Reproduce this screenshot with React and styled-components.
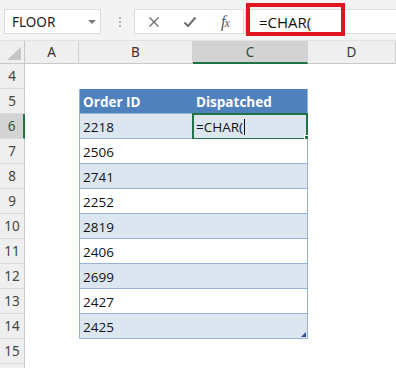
import React from 'react';
import styled, { createGlobalStyle } from 'styled-components';

const Global = createGlobalStyle`
  html, body { margin: 0; padding: 0; background: #fff; }
  body { font-family: "Open Sans", "Liberation Sans", sans-serif; overflow: hidden; }
`;

const Page = styled.div`
  width: 396px;
  height: 368px;
  overflow: hidden;
  background: #fff;
`;

const Toolbar = styled.div`
  height: 40px;
  box-sizing: border-box;
  background: #f3f3f3;
  display: flex;
  align-items: flex-start;
  padding: 9px 0 0 4px;
`;

const NameBox = styled.div`
  width: 97px;
  height: 25px;
  box-sizing: border-box;
  background: #fff;
  border: 1px solid #dcdcdc;
  display: flex;
  align-items: center;
  justify-content: space-between;
  padding: 0 4px 0 7px;
  font: 13.5px "Noto Sans", sans-serif;
  color: #222;
`;

const Caret = styled.span`
  width: 0;
  height: 0;
  border-left: 4px solid transparent;
  border-right: 4px solid transparent;
  border-top: 4px solid #7a7a7a;
`;

const Dots = styled.div`
  margin: 8px 13px 0 18px;
  display: flex;
  flex-direction: column;
  gap: 2px;
  & > span {
    width: 2px;
    height: 2px;
    background: #b5b5b5;
  }
`;

const FxBox = styled.div`
  width: 110px;
  height: 25px;
  box-sizing: border-box;
  background: #fff;
  border: 1px solid #dcdcdc;
  display: flex;
  align-items: center;
`;

const FxSlot = styled.div`
  width: ${p => p.$w}px;
  height: 100%;
  display: flex;
  align-items: center;
  justify-content: center;
`;

const FxText = styled.span`
  font: italic 16px "Liberation Serif", serif;
  color: #555;
  letter-spacing: -1px;
  & > small { font-size: 12px; }
`;

const FormulaInput = styled.div`
  position: relative;
  flex: 1;
  height: 25px;
  margin-left: 1px;
  box-sizing: border-box;
  background: #fff;
  border: 1px solid #dcdcdc;
  border-right: none;
  display: flex;
  align-items: center;
  padding-left: 13px;
  font: 15px "Open Sans", sans-serif;
  color: #111;
`;

const Highlight = styled.div`
  position: absolute;
  left: 0px;
  top: -7px;
  width: 99px;
  height: 33px;
  box-sizing: border-box;
  border: 4px solid #e0151f;
  pointer-events: none;
`;

const HeaderRow = styled.div`
  display: flex;
  height: 24px;
  background: #efefef;
  border-top: 1px solid #e2e2e2;
  box-sizing: border-box;
`;

const Corner = styled.div`
  width: 25px;
  flex: none;
  box-sizing: border-box;
  border-right: 1px solid #c8c8c8;
  border-bottom: 1px solid #c8c8c8;
  display: flex;
  align-items: flex-end;
  justify-content: flex-end;
  padding: 0 3px 3px 0;
`;

const Triangle = styled.span`
  width: 0;
  height: 0;
  border-left: 14px solid transparent;
  border-bottom: 13px solid #c6c6c6;
`;

const ColHead = styled.div`
  width: ${p => (p.$w ? `${p.$w}px` : 'auto')};
  flex: ${p => (p.$w ? 'none' : '1')};
  box-sizing: border-box;
  background: ${p => (p.$sel ? '#d3d3d3' : 'transparent')};
  border-right: 1px solid #d0d0d0;
  border-bottom: ${p => (p.$sel ? '2px solid #217346' : '1px solid #c8c8c8')};
  display: flex;
  align-items: center;
  justify-content: center;
  font: 13.5px "Noto Sans", sans-serif;
  color: ${p => (p.$sel ? '#2f4f3c' : '#333')};
`;

const RowLine = styled.div`
  display: flex;
  height: 25px;
`;

const RowHead = styled.div`
  width: 25px;
  flex: none;
  box-sizing: border-box;
  background: ${p => (p.$sel ? '#d3d3d3' : '#efefef')};
  border-right: ${p => (p.$sel ? '2px solid #217346' : '1px solid #c8c8c8')};
  border-bottom: 1px solid #d9d9d9;
  display: flex;
  align-items: center;
  justify-content: center;
  font: 13.5px "Noto Sans", sans-serif;
  color: ${p => (p.$sel ? '#2f5a40' : '#444')};
`;

const bg = {
  head: '#4f81bd',
  band: '#dce6f1',
  plain: '#ffffff',
  none: '#ffffff',
};

const Cell = styled.div`
  position: relative;
  width: ${p => (p.$w ? `${p.$w}px` : 'auto')};
  flex: ${p => (p.$w ? 'none' : '1')};
  box-sizing: border-box;
  background: ${p => bg[p.$kind]};
  border-bottom: ${p => (p.$kind === 'none' ? 'none' : '1px solid #95b3d7')};
  border-left: ${p => (p.$left ? '1px solid #95b3d7' : 'none')};
  border-right: ${p => (p.$right ? '1px solid #95b3d7' : 'none')};
  display: flex;
  align-items: center;
  padding: 2px 0 0 3px;
  font-family: "Open Sans", "Liberation Sans", sans-serif;
  font-size: 13.5px;
  font-weight: ${p => (p.$kind === 'head' ? 700 : 400)};
  color: ${p => (p.$kind === 'head' ? '#fff' : '#111')};
  white-space: nowrap;
`;

const Selection = styled.div`
  position: absolute;
  left: -1px;
  top: -1px;
  right: -1px;
  bottom: -2px;
  border: 2px solid #217346;
  pointer-events: none;
`;

const FillHandle = styled.div`
  position: absolute;
  right: -4px;
  bottom: -4px;
  width: 5px;
  height: 5px;
  background: #217346;
  border: 1px solid #fff;
`;

const Cursor = styled.span`
  display: inline-block;
  width: 1px;
  height: 16px;
  background: #111;
  margin-left: 1px;
`;

const ResizeMark = styled.div`
  position: absolute;
  right: 1px;
  bottom: 1px;
  width: 0;
  height: 0;
  border-left: 5px solid transparent;
  border-bottom: 5px solid #2f4f8f;
`;

const COLS = [
  { key: 'A', w: 54 },
  { key: 'B', w: 114 },
  { key: 'C', w: 115 },
  { key: 'D', w: 0 },
];

const ids = ['2218', '2506', '2741', '2252', '2819', '2406', '2699', '2427', '2425'];

function XIcon() {
  return (
    <svg width="12" height="12" viewBox="0 0 12 12">
      <path d="M1.5 1.5 L10.5 10.5 M10.5 1.5 L1.5 10.5" stroke="#6e6e6e" strokeWidth="1.4" fill="none" />
    </svg>
  );
}

function CheckIcon() {
  return (
    <svg width="14" height="12" viewBox="0 0 14 12">
      <path d="M1.5 6.5 L5 10 L12.5 1.5" stroke="#6e6e6e" strokeWidth="2" fill="none" />
    </svg>
  );
}

function SheetRow({ n, label = true }) {
  const inTable = n >= 5 && n <= 14;
  const kind = !inTable ? 'none' : n === 5 ? 'head' : n % 2 === 0 ? 'band' : 'plain';
  const b = n === 5 ? 'Order ID' : inTable ? ids[n - 6] : '';
  const sel = n === 6;
  return (
    <RowLine>
      <RowHead $sel={sel}>{label ? n : null}</RowHead>
      <Cell $w={54} $kind="none" />
      <Cell $w={114} $kind={kind} $left={inTable}>{b}</Cell>
      <Cell $w={115} $kind={kind} $right={inTable}>
        {n === 5 && 'Dispatched'}
        {sel && (
          <>
            =CHAR(<Cursor />
            <Selection />
            <FillHandle />
          </>
        )}
        {n === 14 && <ResizeMark />}
      </Cell>
      <Cell $kind="none" />
    </RowLine>
  );
}

export default function App() {
  const rows = [];
  for (let i = 4; i <= 15; i++) rows.push(i);
  return (
    <Page>
      <Global />
      <Toolbar>
        <NameBox>
          FLOOR
          <Caret />
        </NameBox>
        <Dots>
          <span />
          <span />
          <span />
        </Dots>
        <FxBox>
          <FxSlot $w={38}><XIcon /></FxSlot>
          <FxSlot $w={34}><CheckIcon /></FxSlot>
          <FxSlot $w={36}><FxText>f<small>x</small></FxText></FxSlot>
        </FxBox>
        <FormulaInput>
          =CHAR(
          <Highlight />
        </FormulaInput>
      </Toolbar>
      <HeaderRow>
        <Corner><Triangle /></Corner>
        {COLS.map(c => (
          <ColHead key={c.key} $w={c.w} $sel={c.key === 'C'}>{c.key}</ColHead>
        ))}
      </HeaderRow>
      {rows.map(n => <SheetRow key={n} n={n} />)}
      <SheetRow n={16} label={false} />
    </Page>
  );
}
